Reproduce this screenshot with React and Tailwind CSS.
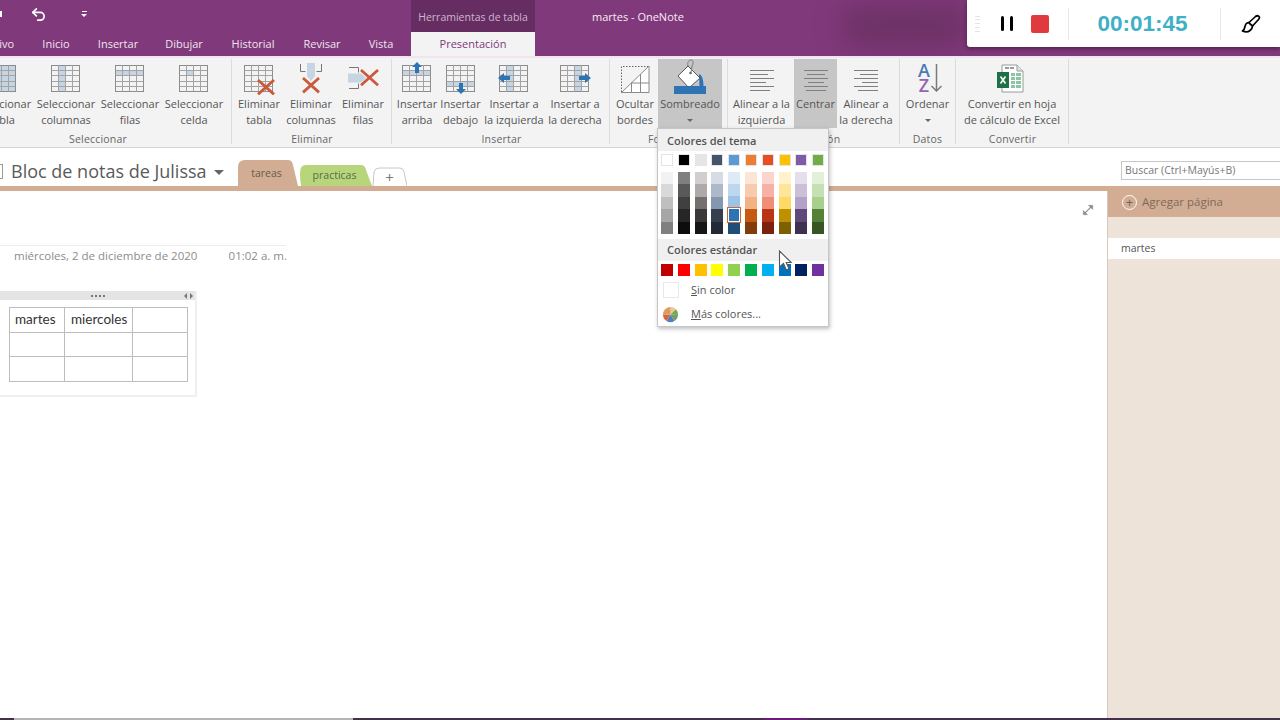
import { Undo2 } from "lucide-react"

const ramps = [
  { top: "bg-[#ffffff]", cells: ["bg-[#f2f2f2]", "bg-[#d9d9d9]", "bg-[#bfbfbf]", "bg-[#a6a6a6]", "bg-[#808080]"] },
  { top: "bg-[#000000]", cells: ["bg-[#7f7f7f]", "bg-[#595959]", "bg-[#404040]", "bg-[#262626]", "bg-[#0d0d0d]"] },
  { top: "bg-[#e7e6e6]", cells: ["bg-[#d0cece]", "bg-[#aeaaaa]", "bg-[#757070]", "bg-[#3a3838]", "bg-[#171616]"] },
  { top: "bg-[#44546a]", cells: ["bg-[#d6dce4]", "bg-[#adb9ca]", "bg-[#8497b0]", "bg-[#333f4f]", "bg-[#222b35]"] },
  { top: "bg-[#5b9bd5]", cells: ["bg-[#deeaf6]", "bg-[#bdd7ee]", "bg-[#9dc3e6]", "bg-[#2e74b5]", "bg-[#1f4e79]"] },
  { top: "bg-[#ed7d31]", cells: ["bg-[#fbe5d5]", "bg-[#f7cbac]", "bg-[#f4b183]", "bg-[#c55a11]", "bg-[#833c0b]"] },
  { top: "bg-[#e84c22]", cells: ["bg-[#fbd5cd]", "bg-[#f6b2a5]", "bg-[#f18e78]", "bg-[#b83516]", "bg-[#7b220e]"] },
  { top: "bg-[#ffc000]", cells: ["bg-[#fff2cc]", "bg-[#fee599]", "bg-[#ffd965]", "bg-[#bf9000]", "bg-[#7f6000]"] },
  { top: "bg-[#7d5ba6]", cells: ["bg-[#e5dfec]", "bg-[#ccc0d9]", "bg-[#b2a2c7]", "bg-[#5f497a]", "bg-[#3f3151]"] },
  { top: "bg-[#70ad47]", cells: ["bg-[#e2efd9]", "bg-[#c5e0b3]", "bg-[#a8d08d]", "bg-[#538135]", "bg-[#375623]"] },
]

const standardColors = [
  "bg-[#c00000]", "bg-[#ff0000]", "bg-[#ffc000]", "bg-[#ffff00]", "bg-[#92d050]",
  "bg-[#00b050]", "bg-[#00b0f0]", "bg-[#0070c0]", "bg-[#002060]", "bg-[#7030a0]",
]

const tabs = [
  { name: "Archivo", width: "w-[56px]" },
  { name: "Inicio", width: "w-[66px]" },
  { name: "Insertar", width: "w-[58px]" },
  { name: "Dibujar", width: "w-[74px]" },
  { name: "Historial", width: "w-[64px]" },
  { name: "Revisar", width: "w-[74px]" },
  { name: "Vista", width: "w-[44px]" },
]

// 4x5 grid used by most of the table buttons
function TableIcon({ fill, children }) {
  return (
    <svg width="34" height="34" viewBox="0 0 34 34">
      {fill}
      <g stroke="#a3a3a3" strokeWidth="1" fill="none">
        <rect x="2.5" y="4.5" width="28" height="26" stroke="#8c8c8c" />
        <path d="M9.5 4.5v26M16.5 4.5v26M23.5 4.5v26M2.5 9.5h28M2.5 14.5h28M2.5 20.5h28M2.5 25.5h28" />
      </g>
      {children}
    </svg>
  )
}

const hi = "#c6d5e3"

function XMark({ x, y, s = 14 }) {
  return (
    <path
      d={`M${x} ${y}l${s} ${s * 0.9}M${x + s} ${y}l${-s} ${s * 0.9}`}
      stroke="#cb5a3c"
      strokeWidth="2.8"
      fill="none"
    />
  )
}

function ArrowUp() {
  return <path d="M17 1l5 5h-3v6h-4V6h-3z" fill="#2e74b5" />
}

function ArrowDown() {
  return <path d="M17 33l5-5h-3v-6h-4v6h-3z" fill="#2e74b5" />
}

function HideBordersIcon() {
  return (
    <svg width="34" height="34" viewBox="0 0 34 34">
      <path d="M3.5 31V5.5H30" stroke="#666" strokeWidth="1" strokeDasharray="1.5 1.5" fill="none" />
      <path d="M3 32L31 5v26.5z" fill="#fff" />
      <path d="M3 32L31 5v26.5H3M13.5 22v9.5M22.5 13v18.5M13 22h18" stroke="#8a8a8a" strokeWidth="1" fill="none" />
    </svg>
  )
}

function BucketIcon() {
  return (
    <svg width="40" height="37" viewBox="0 0 40 37">
      <path d="M29 15c3 1 4.5 5 4.5 13h-4z" fill="#2e74b5" />
      <path d="M8 17L18 7l12 12-11 10z" fill="#fff" stroke="#555" strokeWidth="1" />
      <path d="M18 7c-1-4 1-6 3-6s3 2 1 6l-1 6" stroke="#777" strokeWidth="1" fill="none" />
      <circle cx="20.5" cy="14" r="1.3" fill="#666" />
      <rect x="4" y="27" width="32" height="8" fill="#2e74b5" />
    </svg>
  )
}

function AlignIcon({ side }) {
  const widths = [24, 18, 24, 16, 24, 20]
  return (
    <svg width="26" height="34" viewBox="0 0 26 34">
      {widths.map((w, i) => {
        const x = side === "left" ? 1 : side === "right" ? 25 - w : 13 - w / 2
        return <rect key={i} x={x} y={9 + i * 4} width={w} height="1" fill="#7f7f7f" />
      })}
    </svg>
  )
}

function SortIcon() {
  return (
    <svg width="30" height="34" viewBox="0 0 30 34">
      <text x="11" y="16" textAnchor="middle" fontSize="18" fontWeight="600" fontFamily="Open Sans, sans-serif" fill="#4a7ab5">A</text>
      <text x="11" y="31" textAnchor="middle" fontSize="18" fontWeight="600" fontFamily="Open Sans, sans-serif" fill="#9463b5">Z</text>
      <path d="M23.5 3v27M18.5 25l5 5 5-5" stroke="#7a7a7a" strokeWidth="1.5" fill="none" />
    </svg>
  )
}

function ExcelIcon() {
  return (
    <svg width="32" height="34" viewBox="0 0 32 34">
      <g transform="translate(-2 0)">
        <path d="M8 4h15l6 6v21H8z" fill="#fff" stroke="#9a9a9a" strokeWidth="1" />
        <path d="M23 4v6h6" fill="#e3e3e3" stroke="#9a9a9a" strokeWidth="1" />
        <rect x="11" y="6" width="4" height="2" fill="#9a9a9a" />
        <rect x="16" y="6" width="4" height="2" fill="#9a9a9a" />
        <g fill="#8cc5a4">
          <rect x="17" y="12" width="4" height="3" />
          <rect x="22" y="12" width="5" height="3" />
          <rect x="17" y="16" width="4" height="3" />
          <rect x="22" y="16" width="5" height="3" />
          <rect x="17" y="20" width="4" height="3" />
          <rect x="22" y="20" width="5" height="3" />
          <rect x="17" y="24" width="4" height="3" />
          <rect x="22" y="24" width="5" height="3" />
        </g>
        <rect x="3" y="11" width="12" height="16" fill="#1e7145" />
        <path d="M6.5 15.5l5 7M11.5 15.5l-5 7" stroke="#fff" strokeWidth="1.6" />
      </g>
    </svg>
  )
}

function RibbonButton({ width, icon, lines, caret, active }) {
  return (
    <div className={`${width} h-[69px] shrink-0 flex flex-col items-center ${active ? "bg-[#c6c6c6]" : ""}`}>
      <div className="h-[37px] flex items-center justify-center">{icon}</div>
      {lines.map((line) => (
        <span key={line} className="h-4 leading-4 whitespace-nowrap">{line}</span>
      ))}
      {caret && (
        <span className="h-4 flex items-center">
          <span className="w-0 h-0 border-x-[3px] border-x-transparent border-t-[3px] border-t-[#666]" />
        </span>
      )}
    </div>
  )
}

function RibbonGroup({ label, className, children }) {
  return (
    <div className={`h-[85px] shrink-0 flex flex-col border-r border-[#dcdcdc] ${className}`}>
      <div className="flex h-[69px]">{children}</div>
      <div className="mt-[3px] h-[13px] leading-4 text-center text-[10.5px] text-[#666] tracking-[0.2px]">{label}</div>
    </div>
  )
}

function Ribbon() {
  return (
    <div className="h-[92px] shrink-0 flex items-start pt-[1px] bg-[#f3f3f3] border-t-2 border-b border-t-[#efe4ef] border-b-[#d4d4d4] text-[11px] text-[#555]">
      <RibbonGroup label="Seleccionar" className="ml-[-30px] w-[262px] pr-[5px]">
        <RibbonButton width="w-16" lines={["Seleccionar", "tabla"]} icon={<TableIcon fill={<rect x="2" y="4" width="29" height="27" fill={hi} />} />} />
        <RibbonButton width="w-16" lines={["Seleccionar", "columnas"]} icon={<TableIcon fill={<rect x="9" y="4" width="8" height="27" fill={hi} />} />} />
        <RibbonButton width="w-16" lines={["Seleccionar", "filas"]} icon={<TableIcon fill={<rect x="2" y="9" width="29" height="6" fill={hi} />} />} />
        <RibbonButton width="w-16" lines={["Seleccionar", "celda"]} icon={<TableIcon fill={<rect x="9" y="9" width="8" height="6" fill={hi} />} />} />
      </RibbonGroup>
      <RibbonGroup label="Eliminar" className="w-[160px] pl-[1px]">
        <RibbonButton width="w-[52px]" lines={["Eliminar", "tabla"]} icon={<TableIcon><XMark x={16} y={19} s={16} /></TableIcon>} />
        <RibbonButton
          width="w-[52px]"
          lines={["Eliminar", "columnas"]}
          icon={
            <svg width="34" height="34" viewBox="0 0 34 34">
              <path d="M6.5 3v7.5h5M27.5 3v7.5h-5" stroke="#777" fill="none" />
              <path d="M13 2h8v13l-4 5-4-5z" fill={hi} />
              <XMark x={9} y={17} s={16} />
            </svg>
          }
        />
        <RibbonButton
          width="w-[52px]"
          lines={["Eliminar", "filas"]}
          icon={
            <svg width="34" height="34" viewBox="0 0 34 34">
              <path d="M3 6.5h9.5v5M3 27.5h9.5v-5" stroke="#777" fill="none" />
              <path d="M2 12.5h13l5 4.5-5 4.5H2z" fill={hi} />
              <XMark x={15} y={9} s={17} />
            </svg>
          }
        />
      </RibbonGroup>
      <RibbonGroup label="Insertar" className="w-[218px] pl-[2px]">
        <RibbonButton width="w-[46px]" lines={["Insertar", "arriba"]} icon={<TableIcon fill={<rect x="2" y="9" width="29" height="6" fill={hi} />}><ArrowUp /></TableIcon>} />
        <RibbonButton width="w-[41px]" lines={["Insertar", "debajo"]} icon={<TableIcon fill={<rect x="2" y="20" width="29" height="6" fill={hi} />}><ArrowDown /></TableIcon>} />
        <RibbonButton width="w-[66px]" lines={["Insertar a", "la izquierda"]} icon={<TableIcon fill={<rect x="9" y="4" width="8" height="27" fill={hi} />}><path d="M1 17l6-5v3h6v4H7v3z" fill="#2e74b5" /></TableIcon>} />
        <RibbonButton width="w-[56px]" lines={["Insertar a", "la derecha"]} icon={<TableIcon fill={<rect x="16" y="4" width="8" height="27" fill={hi} />}><path d="M33 17l-6-5v3h-6v4h6v3z" fill="#2e74b5" /></TableIcon>} />
      </RibbonGroup>
      <RibbonGroup label="Formato" className="w-[118px] pl-[2px]">
        <RibbonButton width="w-[46px]" lines={["Ocultar", "bordes"]} icon={<HideBordersIcon />} />
        <RibbonButton width="w-16" lines={["Sombreado"]} caret active icon={<BucketIcon />} />
      </RibbonGroup>
      <RibbonGroup label="Alineación" className="w-[172px] pl-[1px]">
        <RibbonButton width="w-[65px]" lines={["Alinear a la", "izquierda"]} icon={<AlignIcon side="left" />} />
        <RibbonButton width="w-[43px]" lines={["Centrar"]} active icon={<AlignIcon side="center" />} />
        <RibbonButton width="w-[58px]" lines={["Alinear a", "la derecha"]} icon={<AlignIcon side="right" />} />
      </RibbonGroup>
      <RibbonGroup label="Datos" className="w-[56px]">
        <RibbonButton width="w-[55px]" lines={["Ordenar"]} caret icon={<SortIcon />} />
      </RibbonGroup>
      <RibbonGroup label="Convertir" className="w-[113px] pl-[1px]">
        <RibbonButton width="w-[110px]" lines={["Convertir en hoja", "de cálculo de Excel"]} icon={<ExcelIcon />} />
      </RibbonGroup>
    </div>
  )
}

function ColorMenu() {
  return (
    <div className="absolute left-[657px] top-[128px] w-[172px] bg-white border border-[#c6c6c6] shadow-[1px_2px_4px_rgba(0,0,0,0.25)] text-[11px] text-[#555] z-20">
      <div className="h-[22px] pl-[9px] pt-[2px] flex items-center bg-[#f0f0f0] font-semibold">Colores del tema</div>
      <div className="mt-[3px] pl-[3px] flex gap-x-[4.8px]">
        {ramps.map((ramp) => (
          <div key={ramp.top} className={`w-3 h-3 shrink-0 border border-[#e4e4e4] ${ramp.top}`} />
        ))}
      </div>
      <div className="mt-[6px] pl-[3px] flex gap-x-[4.8px]">
        {ramps.map((ramp) => (
          <div key={ramp.top} className="w-3 h-[62px] shrink-0 flex flex-col">
            {ramp.cells.map((cell) => (
              <div
                key={cell}
                className={`flex-1 ${cell} ${cell === "bg-[#2e74b5]" ? "relative z-10 border border-white outline-1 outline-[#c8683a]" : ""}`}
              />
            ))}
          </div>
        ))}
      </div>
      <div className="mt-[5px] h-[22px] pl-[9px] flex items-center bg-[#f0f0f0] font-semibold">Colores estándar</div>
      <div className="mt-[3px] pl-[3px] flex gap-x-[4.8px]">
        {standardColors.map((color) => (
          <div key={color} className={`w-3 h-3 shrink-0 ${color}`} />
        ))}
      </div>
      <div className="mt-[2px] h-6 flex items-center pl-[5px]">
        <div className="w-4 h-4 border border-[#e8e8e8] bg-white" />
        <span className="ml-[12px]"><u>S</u>in color</span>
      </div>
      <div className="h-6 flex items-center pl-[4px]">
        <svg width="17" height="17" viewBox="0 0 34 34">
          <path d="M17 17V2a15 15 0 0 1 11 4.5z" fill="#e8c79a" />
          <path d="M17 17l11-10.5A15 15 0 0 1 32 18z" fill="#70ad47" />
          <path d="M17 17l15 1a15 15 0 0 1-7 12z" fill="#7d9a6a" />
          <path d="M17 17l8 13a15 15 0 0 1-16 0z" fill="#4f81bd" />
          <path d="M17 17L9 30A15 15 0 0 1 2 17z" fill="#d9663a" />
          <path d="M17 17H2A15 15 0 0 1 17 2z" fill="#e09a5a" />
        </svg>
        <span className="ml-[12px]"><u>M</u>ás colores...</span>
      </div>
    </div>
  )
}

function TimerCard() {
  return (
    <div className="absolute left-[967px] top-0 w-[313px] h-[47px] bg-white rounded-bl-[3px] shadow-[0_2px_4px_rgba(40,10,40,0.5)] flex items-center pl-[8px] z-30">
      <div className="w-[5px] h-4 flex flex-col justify-between">
        <div className="h-px bg-[#e4e4e4]" />
        <div className="h-px bg-[#e4e4e4]" />
        <div className="h-px bg-[#e4e4e4]" />
        <div className="h-px bg-[#e4e4e4]" />
        <div className="h-px bg-[#e4e4e4]" />
      </div>
      <div className="ml-[21px] w-3 h-[15px] flex justify-between">
        <div className="w-[3px] bg-black rounded-sm" />
        <div className="w-[3px] bg-black rounded-sm" />
      </div>
      <div className="ml-[18px] w-[18px] h-[18px] bg-[#e03a3e] rounded-[2px]" />
      <div className="ml-[19px] w-px h-8 bg-[#e8e8e8]" />
      <div className="w-[148px] pr-[1px] text-center text-[22.5px] font-bold text-[#3fb0c6] font-['Liberation_Sans',sans-serif]">00:01:45</div>
      <div className="ml-[3px] w-px h-8 bg-[#e8e8e8]" />
      <svg className="ml-[20px]" width="20" height="20" viewBox="0 0 20 20" fill="none" stroke="#000" strokeWidth="1.7" strokeLinejoin="round">
        <path d="M8 8.5L14.5 2.5Q16.5 1 18 2.5Q19 4 17.5 5.5L11.5 12" />
        <path d="M7.5 8.5Q4.5 9 4 12.5Q3.5 15.5 1.5 17Q6 19 9 16.5Q11.5 14.5 11.5 12Z" />
      </svg>
    </div>
  )
}

function SectionTab({ width, height, d, fill, stroke, textClass, label }) {
  return (
    <div className={`relative ${width} ${height} flex items-center justify-center`}>
      <svg className="absolute inset-0 w-full h-full" viewBox={`0 0 ${d.w} ${d.h}`} preserveAspectRatio="none">
        <path d={d.path} fill={fill} stroke={stroke} />
      </svg>
      <span className={`relative ${textClass}`}>{label}</span>
    </div>
  )
}

export default function App() {
  return (
    <div className="relative w-[1280px] h-[720px] overflow-hidden flex flex-col bg-white font-['Open_Sans',sans-serif]">
      {/* title bar */}
      <div className="relative h-14 shrink-0 overflow-hidden bg-[#80397b] text-[11px]">
        <div className="absolute left-[840px] top-[4px] w-[130px] h-[44px] rounded-full bg-[#6e3267] blur-md" />
        <div className="relative flex h-8">
          <div className="w-[411px] flex items-center pb-[4px]">
            <div className="w-[2px] h-[6px] bg-white" />
            <Undo2 className="ml-[28px] text-white" size={17} strokeWidth={2.4} />
            <div className="ml-[34px] flex flex-col items-center gap-[2px]">
              <div className="w-[5px] h-px bg-white" />
              <div className="w-0 h-0 border-x-[3px] border-x-transparent border-t-[3px] border-t-white" />
            </div>
          </div>
          <div className="w-[124px] pt-[3px] flex items-center justify-center bg-[#662d63] text-[10.5px] text-[#cdb6cc]">Herramientas de tabla</div>
          <div className="pl-[57px] pt-[2px] flex items-center text-[#f5eef4]">martes - OneNote</div>
        </div>
        <div className="relative flex h-6 ml-[-33px] text-[#f0e4ef]">
          {tabs.map((tab) => (
            <div key={tab.name} className={`${tab.width} flex items-center justify-center`}>{tab.name}</div>
          ))}
          <div className="ml-[8px] w-[124px] flex items-center justify-center bg-[#f3f3f3] text-[#80397b]">Presentación</div>
        </div>
      </div>

      <Ribbon />

      {/* notebook name and section tabs */}
      <div className="h-[38px] shrink-0 flex items-end text-[#666]">
        <div className="w-[238px] self-start mt-[13px] flex items-center">
          <div className="w-[3px] h-[15px] border-y border-r border-[#999]" />
          <span className="ml-[8px] text-[18px] leading-5 text-[#5a5a5a] whitespace-nowrap">Bloc de notas de Julissa</span>
          <span className="ml-[7px] mt-[2px] w-0 h-0 border-x-[5px] border-x-transparent border-t-[5px] border-t-[#666]" />
        </div>
        <SectionTab
          width="w-[60px]"
          height="h-[26px]"
          d={{ w: 60, h: 26, path: "M0 26V7Q0 0 7 0H50Q54 0 55 5L60 26Z" }}
          fill="#d2ad93"
          stroke="none"
          textClass="text-[10.5px] text-[#6b5a4d] mt-[1px] mr-[3px]"
          label="tareas"
        />
        <SectionTab
          width="w-[73px] ml-[1px]"
          height="h-[21px]"
          d={{ w: 73, h: 21, path: "M2 21Q0 6 2 3Q3 0 7 0H62Q66 0 67 5L73 21Z" }}
          fill="#b7d67c"
          stroke="none"
          textClass="text-[10.5px] text-[#5d6b47] mt-[1px] mr-[2px]"
          label="practicas"
        />
        <SectionTab
          width="w-[35px]"
          height="h-[19px]"
          d={{ w: 35, h: 19, path: "M1 19L2 5Q3 1 7 1H28Q31 1 32 5L35 19" }}
          fill="#fff"
          stroke="#c8c8c8"
          textClass="text-[15px] leading-none text-[#777] mt-[1px]"
          label="+"
        />
        <div className="ml-auto mr-[-6px] self-start mt-[13px] w-[165px] h-[19px] pl-[3px] flex items-center bg-white border border-[#c8c8c8] text-[10.5px] text-[#777]">
          Buscar (Ctrl+Mayús+B)
        </div>
      </div>
      <div className="h-[5px] shrink-0 bg-[#d2ad93]" />

      {/* page area */}
      <div className="flex-1 flex min-h-0">
        <div className="flex-1 flex flex-col">
          <div className="h-[26px] flex justify-end pr-[13px] pt-[13px]">
            <svg width="12" height="12" viewBox="0 0 14 14" fill="#8a8a8a" stroke="#8a8a8a">
              <path d="M3 11L11 3" strokeWidth="1.3" />
              <path d="M7.5 1.5h5v5zM1.5 7.5v5h5z" strokeWidth="0.5" />
            </svg>
          </div>
          <div className="mt-[28px] w-[286px] h-px bg-[#ececec]" />
          <div className="mt-[2px] w-[287px] h-4 pl-[14px] flex justify-between items-center text-[11.5px] text-[#8c8c8c] whitespace-nowrap">
            <span>miércoles, 2 de diciembre de 2020</span>
            <span>01:02 a. m.</span>
          </div>
          <div className="mt-[27px] w-[197px] h-[106px] border-r-2 border-b-2 border-[#f0f0f0]">
            <div className="h-[9px] flex items-center bg-[#e4e4e4]">
              <div className="ml-[91px] flex gap-[2px]">
                <div className="w-[2px] h-[2px] bg-[#777]" />
                <div className="w-[2px] h-[2px] bg-[#777]" />
                <div className="w-[2px] h-[2px] bg-[#777]" />
                <div className="w-[2px] h-[2px] bg-[#777]" />
              </div>
              <div className="ml-auto mr-[2px] flex gap-[3px]">
                <div className="w-0 h-0 border-y-[3px] border-y-transparent border-r-[3px] border-r-[#777]" />
                <div className="w-0 h-0 border-y-[3px] border-y-transparent border-l-[3px] border-l-[#777]" />
              </div>
            </div>
            <table className="mt-[7px] ml-[9px] w-[179px] table-fixed border-collapse font-['Lato',sans-serif] text-[13.5px] text-[#333]">
              <tbody>
                <tr className="h-[24.5px]">
                  <td className="w-[55px] pl-[5px] pb-[2px] border border-[#bdbdbd]">martes</td>
                  <td className="w-[68px] pl-[6px] pb-[2px] border border-[#bdbdbd]">miercoles</td>
                  <td className="border border-[#bdbdbd]" />
                </tr>
                <tr className="h-[24.5px]">
                  <td className="border border-[#bdbdbd]" />
                  <td className="border border-[#bdbdbd]" />
                  <td className="border border-[#bdbdbd]" />
                </tr>
                <tr className="h-[24.5px]">
                  <td className="border border-[#bdbdbd]" />
                  <td className="border border-[#bdbdbd]" />
                  <td className="border border-[#bdbdbd]" />
                </tr>
              </tbody>
            </table>
          </div>
        </div>

        <div className="w-[173px] shrink-0 flex flex-col border-l border-[#d6cabf] text-[10.5px] text-[#555]">
          <div className="h-[26px] pl-[14px] pb-[4px] flex items-center bg-[#d2ad93] text-[#7d6a5b]">
            <div className="w-[15px] h-[15px] rounded-full border border-white flex items-center justify-center text-[13px] leading-none text-[#666]">+</div>
            <span className="ml-[5px] text-[11.5px]">Agregar página</span>
          </div>
          <div className="h-[21px] bg-[#eee3d8]" />
          <div className="h-[21px] pl-[13px] flex items-center bg-white">martes</div>
          <div className="flex-1 bg-[#eee3d8]" />
        </div>
      </div>

      {/* strip of the taskbar at the very bottom */}
      <div className="h-[2px] shrink-0 flex bg-[#45304a]">
        <div className="w-[14px]" />
        <div className="w-[339px] bg-[#b5b5b5]" />
        <div className="w-[410px]" />
        <div className="w-[45px] bg-[#6a1b7a]" />
      </div>

      <ColorMenu />
      <TimerCard />

      {/* mouse pointer */}
      <svg className="absolute left-[778px] top-[250px] z-40" width="15" height="22" viewBox="0 0 15 22">
        <path d="M1.5 1v16l4-3.5 2.8 6.5 2.7-1.2-2.8-6.3h5z" fill="#fff" stroke="#555" strokeWidth="1.1" />
      </svg>
    </div>
  )
}
